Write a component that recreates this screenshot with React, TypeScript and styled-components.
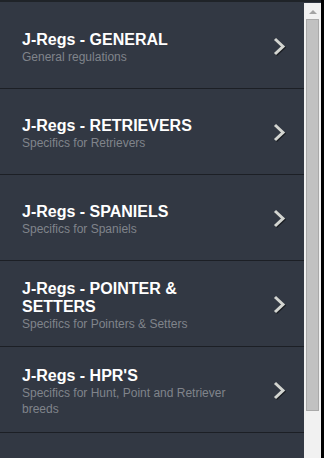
import React from "react";
import styled, { createGlobalStyle } from "styled-components";

const Global = createGlobalStyle`
  html, body { margin: 0; padding: 0; background: #000; }
  body { font-family: "Liberation Sans", Arial, sans-serif; }
  * { box-sizing: border-box; }
`;

const Frame = styled.div`
  width: 324px;
  height: 458px;
  display: flex;
  overflow: hidden;
  background: #000;
`;

const Main = styled.div`
  flex: 1;
  display: flex;
  flex-direction: column;
  min-width: 0;
`;

const TopStrip = styled.div`
  height: 3px;
  flex: 0 0 3px;
  background: linear-gradient(#1f2328 0 2px, #323843 2px);
`;

const Body = styled.div`
  flex: 1;
  display: flex;
  min-height: 0;
`;

const List = styled.ul`
  flex: 1;
  margin: 0;
  padding: 0;
  list-style: none;
  background: #323843;
  overflow: hidden;
`;

const Row = styled.li`
  display: flex;
  align-items: center;
  min-height: 86px;
  padding: 5px 18px 0 22px;
  border-bottom: 1px solid #1c1f25;
  cursor: pointer;
`;

const Texts = styled.div`
  flex: 1;
  max-width: 222px;
  margin-right: auto;
`;

const Title = styled.div`
  color: #ffffff;
  font-weight: bold;
  font-size: 16px;
  line-height: 18px;
`;

const Subtitle = styled.div`
  color: #80848b;
  font-size: 12px;
  line-height: 16px;
`;

const Chevron = styled.svg`
  flex: 0 0 auto;
  width: 13px;
  height: 19px;
  margin-top: -3px;
  filter: drop-shadow(1px 1px 0 #1b1e23);
`;

const Scrollbar = styled.div`
  flex: 0 0 17px;
  background: #f1f1f1;
  display: flex;
  flex-direction: column;
  align-items: center;
  padding-top: 7px;
`;

const ArrowUp = styled.div`
  width: 0;
  height: 0;
  border-left: 4px solid transparent;
  border-right: 4px solid transparent;
  border-bottom: 4px solid #a3a3a3;
  margin-left: 1px;
`;

const Thumb = styled.div`
  margin-top: 5px;
  width: 13px;
  height: 392px;
  background: #c1c1c1;
  border: 1px solid #a9a9a9;
`;

const Edge = styled.div`
  flex: 0 0 3px;
  background: #000;
`;

const items = [
  { title: "J-Regs - GENERAL", sub: "General regulations" },
  { title: "J-Regs - RETRIEVERS", sub: "Specifics for Retrievers" },
  { title: "J-Regs - SPANIELS", sub: "Specifics for Spaniels" },
  { title: "J-Regs - POINTER & SETTERS", sub: "Specifics for Pointers & Setters" },
  { title: "J-Regs - HPR'S", sub: "Specifics for Hunt, Point and Retriever breeds" },
];

export default function App() {
  return (
    <>
      <Global />
      <Frame>
        <Main>
          <TopStrip />
          <Body>
            <List>
              {items.map((it) => (
                <Row key={it.title}>
                  <Texts>
                    <Title>{it.title}</Title>
                    <Subtitle>{it.sub}</Subtitle>
                  </Texts>
                  <Chevron viewBox="0 0 13 19">
                    <polyline
                      points="2,2 10,9.5 2,17"
                      fill="none"
                      stroke="#d3d5d1"
                      strokeWidth="3"
                      strokeLinecap="butt"
                      strokeLinejoin="miter"
                    />
                  </Chevron>
                </Row>
              ))}
              <Row />
            </List>
            <Scrollbar>
              <ArrowUp />
              <Thumb />
            </Scrollbar>
          </Body>
        </Main>
        <Edge />
      </Frame>
    </>
  );
}
